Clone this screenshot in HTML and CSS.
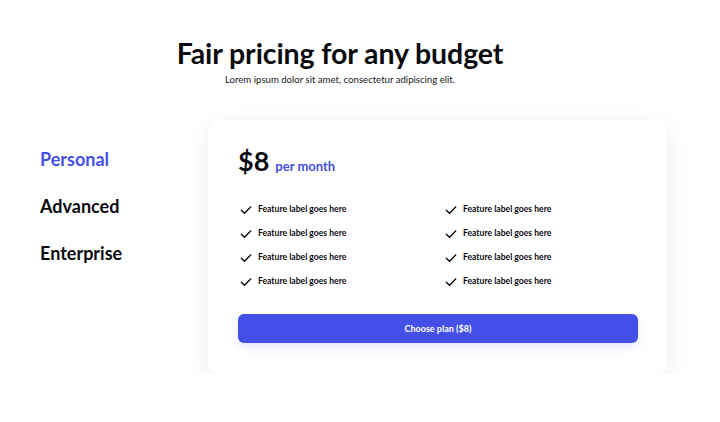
FILE: index.html
```html
<!DOCTYPE html>
<html lang="en">
<head>
    <meta charset="UTF-8">
    <meta name="viewport" content="width=device-width, initial-scale=1.0">
    <title>Pricing</title>
    <link rel="stylesheet" href="styles.css">
</head>
<body>
    <header class="intro">
        <h1>Fair pricing for any budget</h1>
        <p>Lorem ipsum dolor sit amet, consectetur adipiscing elit.</p>
    </header>

    <main class="pricing">
        <nav class="plans">
            <a class="plan active" href="#">Personal</a>
            <a class="plan" href="#">Advanced</a>
            <a class="plan" href="#">Enterprise</a>
        </nav>

        <section class="card">
            <div class="price">
                <span class="amount">$8</span>
                <span class="period">per month</span>
            </div>
            <ul class="features">
                <li><svg viewBox="0 0 12 12"><path d="M1.3 6.2 4.5 9.3 10.7 3"/></svg>Feature label goes here</li>
                <li><svg viewBox="0 0 12 12"><path d="M1.3 6.2 4.5 9.3 10.7 3"/></svg>Feature label goes here</li>
                <li><svg viewBox="0 0 12 12"><path d="M1.3 6.2 4.5 9.3 10.7 3"/></svg>Feature label goes here</li>
                <li><svg viewBox="0 0 12 12"><path d="M1.3 6.2 4.5 9.3 10.7 3"/></svg>Feature label goes here</li>
                <li><svg viewBox="0 0 12 12"><path d="M1.3 6.2 4.5 9.3 10.7 3"/></svg>Feature label goes here</li>
                <li><svg viewBox="0 0 12 12"><path d="M1.3 6.2 4.5 9.3 10.7 3"/></svg>Feature label goes here</li>
                <li><svg viewBox="0 0 12 12"><path d="M1.3 6.2 4.5 9.3 10.7 3"/></svg>Feature label goes here</li>
                <li><svg viewBox="0 0 12 12"><path d="M1.3 6.2 4.5 9.3 10.7 3"/></svg>Feature label goes here</li>
            </ul>
            <button class="choose">Choose plan ($8)</button>
        </section>
    </main>
</body>
</html>
```

FILE: styles.css
```css
body {
    margin: 0;
    background: #fff;
    color: #0b0b0f;
    font-family: "Lato", "Noto Sans", sans-serif;
}

.intro {
    padding: 36px 40px 0 0;
    text-align: center;
}

.intro h1 {
    margin: 0;
    font-size: 28.5px;
    font-weight: 700;
    letter-spacing: -0.1px;
    line-height: 34px;
}

.intro p {
    margin: 4px 0 0;
    font-size: 9.6px;
    color: #1a1a22;
}

.pricing {
    display: flex;
    padding: 35px 0 0 40px;
}

.plans {
    display: flex;
    flex-direction: column;
    gap: 24px;
    width: 168px;
    padding-top: 28px;
}

.plan {
    font-size: 18px;
    font-weight: 700;
    line-height: 23px;
    color: #0b0b0f;
    text-decoration: none;
}

.plan.active {
    color: #434fe6;
}

.card {
    width: 400px;
    padding: 24px 29px 31px 30px;
    background: #fff;
    border-radius: 10px;
    box-shadow: 0 6px 24px rgba(30, 30, 60, 0.08);
}

.price {
    display: flex;
    align-items: baseline;
    gap: 6px;
}

.amount {
    font-size: 27px;
    font-weight: 700;
    line-height: 34px;
}

.period {
    font-size: 13px;
    font-weight: 700;
    color: #434fe6;
}

.features {
    display: grid;
    grid-template-columns: 205px 1fr;
    row-gap: 11px;
    margin: 25px 0 0;
    padding: 0 0 0 2px;
    list-style: none;
}

.features li {
    display: flex;
    align-items: center;
    gap: 6px;
    font-size: 8.6px;
    font-weight: 700;
    line-height: 13px;
}

.features svg {
    width: 12px;
    height: 12px;
    fill: none;
    stroke: #0b0b0f;
    stroke-width: 1.4;
    stroke-linecap: round;
    stroke-linejoin: round;
}

.choose {
    display: block;
    width: 100%;
    height: 29px;
    margin-top: 26px;
    border: none;
    border-radius: 6px;
    background: #434fe6;
    color: #fff;
    font-family: inherit;
    font-size: 9px;
    font-weight: 700;
    box-shadow: 0 4px 10px rgba(67, 79, 230, 0.15);
}
```
